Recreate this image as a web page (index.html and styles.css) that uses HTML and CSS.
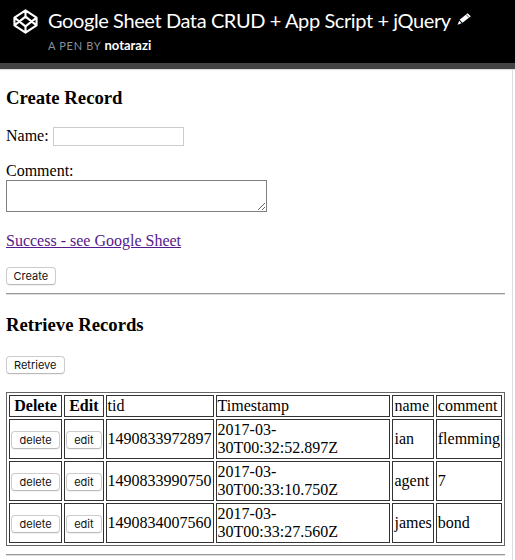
FILE: index.html
```html
<!DOCTYPE html>
<html lang="en">
<head>
<meta charset="utf-8">
<title>Google Sheet Data CRUD + App Script + jQuery</title>
<link rel="stylesheet" href="styles.css">
</head>
<body>
<header class="bar">
  <svg class="logo" viewBox="0 0 26 26" aria-hidden="true">
    <path d="M13 1.5 24.5 9v8L13 24.5 1.5 17V9Z M13 1.5V8 M13 18v6.5 M1.5 9 13 18 24.5 9 M1.5 17 13 8 24.5 17" fill="none" stroke="#fff" stroke-width="2.2" stroke-linejoin="round"/>
  </svg>
  <div class="bar-text">
    <h1 class="pen-title">Google Sheet Data CRUD + App Script + jQuery
      <svg class="pencil" viewBox="0 0 14 12" aria-hidden="true">
        <path d="M10.6.2 13.8 3.3 5.5 9.8 2.6 6.8Z M2.2 7.8 4.6 10.2.6 11.7Z" fill="#fff"/>
        <path d="M9.2 1.6 12 4.5" stroke="#000" stroke-width=".7"/>
      </svg>
    </h1>
    <div class="byline">A PEN BY <b>notarazi</b></div>
  </div>
</header>
<main class="content">
  <h3>Create Record</h3>
  <p class="field">Name: <input class="name-input" type="text"></p>
  <p class="field field-comment">Comment:<br><textarea class="comment-input"></textarea></p>
  <p class="field"><a class="link" href="#">Success - see Google Sheet</a></p>
  <button class="btn btn-create">Create</button>
  <hr class="section-rule">
  <h3>Retrieve Records</h3>
  <button class="btn btn-retrieve">Retrieve</button>
  <table class="records">
    <tr><th>Delete</th><th>Edit</th><td>tid</td><td>Timestamp</td><td>name</td><td>comment</td></tr>
    <tr><td class="center"><button class="btn btn-delete">delete</button></td><td class="center"><button class="btn">edit</button></td><td>1490833972897</td><td>2017-03-30T00:32:52.897Z</td><td>ian</td><td>flemming</td></tr>
    <tr><td class="center"><button class="btn btn-delete">delete</button></td><td class="center"><button class="btn">edit</button></td><td>1490833990750</td><td>2017-03-30T00:33:10.750Z</td><td>agent</td><td>7</td></tr>
    <tr><td class="center"><button class="btn btn-delete">delete</button></td><td class="center"><button class="btn">edit</button></td><td>1490834007560</td><td>2017-03-30T00:33:27.560Z</td><td>james</td><td>bond</td></tr>
  </table>
  <hr class="last">
</main>
</body>
</html>
```
FILE: styles.css
```css
html, body {
  margin: 0;
  padding: 0;
  background: #fff;
  overflow: hidden;
}
body {
  font-family: "Liberation Serif", "Times New Roman", serif;
  font-size: 16px;
  color: #000;
  height: 560px;
}
.bar {
  height: 63px;
  box-sizing: content-box;
  background: #000;
  border-bottom: 6px solid #444;
  display: flex;
  align-items: flex-start;
  padding-left: 13px;
  box-shadow: 0 1px 1px rgba(0,0,0,.12);
}
.logo {
  width: 25px;
  height: 25px;
  margin-top: 9px;
  flex: none;
}
.bar-text {
  margin-left: 10px;
  color: #fff;
  font-family: Lato, sans-serif;
}
.pen-title {
  margin: 6px 0 0;
  font-size: 20px;
  font-weight: 400;
  letter-spacing: -.4px;
  line-height: 28px;
  white-space: nowrap;
}
.pencil {
  width: 14px;
  height: 12px;
  margin-left: 2px;
  vertical-align: 3px;
}
.byline {
  margin-top: 3px;
  font-size: 11px;
  line-height: 16px;
  letter-spacing: .7px;
  color: #8a9299;
}
.byline b {
  color: #fff;
  font-size: 13px;
  letter-spacing: 0;
}
.content {
  display: flow-root;
  width: 499px;
  height: 491px;
  padding: 0 7px 0 6px;
  border-right: 1px solid #ddd;
}
h3 {
  font-size: 18.72px;
  margin: 18px 0;
  line-height: 22px;
}
.field {
  margin: 16px 0;
}
.field-comment {
  margin-bottom: 20px;
}
.name-input {
  width: 131px;
  height: 19px;
  box-sizing: border-box;
  border: 1px solid #ccc;
  padding: 0;
  margin: 0;
  background: #fff;
  vertical-align: baseline;
}
.comment-input {
  display: block;
  width: 261px;
  height: 32px;
  box-sizing: border-box;
  border: 1px solid #808080;
  margin: 0;
  padding: 0;
}
.link {
  color: #551a8b;
}
.btn {
  font-family: Inter, "Liberation Sans", sans-serif;
  font-size: 11px;
  line-height: 14px;
  height: 18px;
  padding: 0 7px;
  color: #111;
  background: #fff;
  border: 1px solid #ccc;
  border-bottom-color: #bbb;
  border-radius: 4px;
  box-shadow: 0 1px 1px rgba(0,0,0,.06);
}
.btn-create {
  padding: 0 6.5px;
}
.btn-retrieve {
  margin-top: 2px;
}
.btn-delete {
  padding: 0 7.5px;
}
hr {
  margin: 8px 0 0;
  border: 0;
  border-top: 1px solid #999;
  border-bottom: 1px solid #ddd;
}
.section-rule {
  margin-bottom: 19px;
}
.records {
  margin-top: 18px;
  border: 1px solid #666;
  border-spacing: 2px;
  width: 499px;
}
.records th,
.records td {
  border: 1px solid #333;
  padding: 1px;
}
.center {
  text-align: center;
}
.last {
  margin-top: 8px;
}
```
